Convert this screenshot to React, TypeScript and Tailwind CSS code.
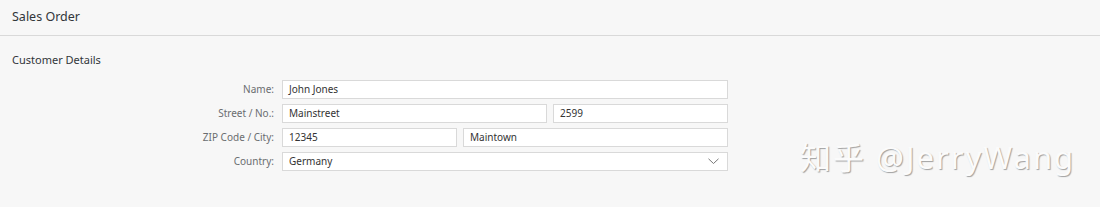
import React from "react";

function Input({ value, className = "" }: { value: string; className?: string }) {
  return (
    <div className={`h-[19px] border border-[#d9d9d9] bg-white pl-[6px] flex items-center text-[10px] text-[#333] ${className}`}>
      {value}
    </div>
  );
}

function Row({ label, children }: { label: string; children: React.ReactNode }) {
  return (
    <div className="flex items-center h-[19px]">
      <div className="w-[274px] text-right text-[10px] text-[#6a6d70]">{label}</div>
      <div className="ml-[8px] w-[446px] flex gap-[6px]">{children}</div>
    </div>
  );
}

export default function App() {
  return (
    <div className="w-[1100px] h-[207px] bg-[#f7f7f7] relative overflow-hidden" style={{ fontFamily: '"Noto Sans", "Open Sans", sans-serif' }}>
      <div className="h-[36px] border-b border-[#d9d9d9] flex items-center pl-[12px] text-[12.5px] text-[#32363a]">
        Sales Order
      </div>
      <div className="pl-[12px] pt-[16px] text-[11px] text-[#32363a] leading-[16px]">Customer Details</div>
      <div className="mt-[12px] flex flex-col gap-[5px]">
        <Row label="Name:">
          <Input value="John Jones" className="w-full" />
        </Row>
        <Row label="Street / No.:">
          <Input value="Mainstreet" className="w-[265px]" />
          <Input value="2599" className="flex-1" />
        </Row>
        <Row label="ZIP Code / City:">
          <Input value="12345" className="w-[175px]" />
          <Input value="Maintown" className="flex-1" />
        </Row>
        <Row label="Country:">
          <div className="w-full h-[19px] border border-[#d9d9d9] bg-white pl-[6px] pr-[8px] flex items-center justify-between text-[10px] text-[#333]">
            <span>Germany</span>
            <svg width="11" height="7" viewBox="0 0 11 7" fill="none">
              <path d="M0.5 0.8 L5.5 5.5 L10.5 0.8" stroke="#777" strokeWidth="1" />
            </svg>
          </div>
        </Row>
      </div>
      <div
        className="absolute left-[800px] top-[134px] text-[31px] text-[#fbfbfb] tracking-[2px]"
        style={{ fontFamily: '"Noto Sans", "Noto Sans CJK SC", sans-serif', textShadow: "1px 1px 1px rgba(0,0,0,0.35)" }}
      >
        知乎 @JerryWang
      </div>
    </div>
  );
}
